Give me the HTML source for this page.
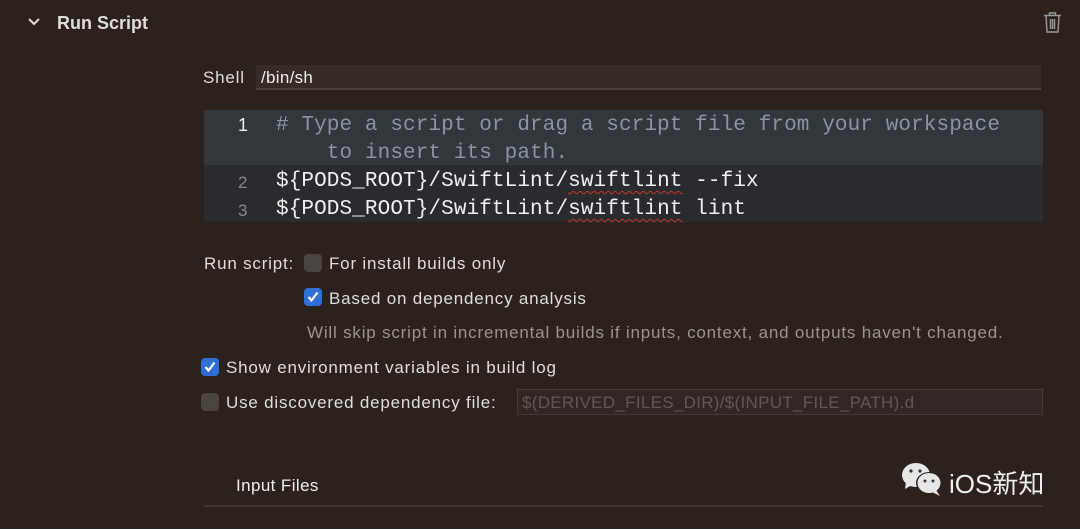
<!DOCTYPE html>
<html><head><meta charset="utf-8"><style>
body{margin:0;width:1080px;height:529px;background:#2b221e;font-family:"Liberation Sans",sans-serif;color:#dedede;position:relative;overflow:hidden}
.a{position:absolute;white-space:nowrap}
.t{font-size:17px;letter-spacing:0.8px}
.cb{position:absolute;width:18px;height:18px;border-radius:4px;background:#4a4441}
.cb.on{background:#2f6fd6}
.mono{font-family:"Liberation Mono",monospace;font-size:21px;letter-spacing:0.1px}
.sq{text-decoration:underline wavy #c0392b;text-decoration-thickness:1px;text-underline-offset:4px}
</style></head><body>
<svg class="a" style="left:27px;top:17px" width="14" height="10"><path d="M2 2 L7 7 L12 2" stroke="#ddd" stroke-width="2" fill="none"/></svg>
<div class="a" style="left:57px;top:13px;font-size:18px;font-weight:bold;color:#ddd">Run Script</div>
<svg class="a" style="left:1043px;top:12px" width="20" height="22"><g stroke="#999" stroke-width="1.4" fill="none"><path d="M1 3.5H18"/><path d="M6.5 3.5V1H12.5V3.5"/><path d="M3 3.5L4 20H15L16 3.5"/><path d="M7.5 7V17M9.5 7V17M11.5 7V17"/></g></svg>
<div class="a t" style="left:203px;top:68px">Shell</div>
<div class="a" style="left:256px;top:65px;width:785px;height:23px;background:#352b27;border-bottom:2px solid #4a403c"></div>
<div class="a t" style="left:261px;top:68px;color:#eee;letter-spacing:0.3px">/bin/sh</div>
<div class="a" style="left:204px;top:110px;width:839px;height:112px;background:#2a2b2f"></div>
<div class="a" style="left:204px;top:110px;width:839px;height:55px;background:#33363b"></div>
<div class="a" style="left:238px;top:115px;font-size:18px;color:#eee">1</div>
<div class="a" style="left:238px;top:173px;font-size:17px;color:#888">2</div>
<div class="a" style="left:238px;top:201px;font-size:17px;color:#888">3</div>
<div class="a mono" style="left:276px;top:112px;color:#8a959e;line-height:28px">#&nbsp;Type&nbsp;a&nbsp;script&nbsp;or&nbsp;drag&nbsp;a&nbsp;script&nbsp;file&nbsp;from&nbsp;your&nbsp;workspace<br>&nbsp;&nbsp;&nbsp;&nbsp;to&nbsp;insert&nbsp;its&nbsp;path.</div>
<div class="a mono" style="left:276px;top:168px;color:#f0f0f0;line-height:28px">${PODS_ROOT}/SwiftLint/<span class="sq">swiftlint</span> --fix<br>${PODS_ROOT}/SwiftLint/<span class="sq">swiftlint</span> lint</div>
<div class="a t" style="left:204px;top:254px">Run script:</div>
<div class="cb" style="left:304px;top:254px"></div>
<div class="a t" style="left:329px;top:254px">For install builds only</div>
<div class="cb on" style="left:304px;top:288px"><svg width="18" height="18"><path d="M4.5 9L7.5 12.5L13.5 4.5" stroke="#fff" stroke-width="2.2" fill="none"/></svg></div>
<div class="a t" style="left:329px;top:289px">Based on dependency analysis</div>
<div class="a t" style="left:307px;top:323px;color:#9a9390">Will skip script in incremental builds if inputs, context, and outputs haven't changed.</div>
<div class="cb on" style="left:201px;top:358px"><svg width="18" height="18"><path d="M4.5 9L7.5 12.5L13.5 4.5" stroke="#fff" stroke-width="2.2" fill="none"/></svg></div>
<div class="a t" style="left:226px;top:358px">Show environment variables in build log</div>
<div class="cb" style="left:201px;top:393px"></div>
<div class="a t" style="left:226px;top:393px">Use discovered dependency file:</div>
<div class="a" style="left:517px;top:389px;width:524px;height:24px;background:#2f2723;border:1px solid #433a36"></div>
<div class="a t" style="left:522px;top:393px;color:#5f5753;letter-spacing:0.3px">$(DERIVED_FILES_DIR)/$(INPUT_FILE_PATH).d</div>
<div class="a t" style="left:236px;top:476px;color:#eee;letter-spacing:0.4px">Input Files</div>
<div class="a" style="left:204px;top:505px;width:839px;height:2px;background:#3e3532"></div>
<svg class="a" style="left:900px;top:460px" width="46" height="38"><ellipse cx="16" cy="15" rx="14" ry="12" fill="#e6e6e6"/><path d="M6 22L5 29L12 25Z" fill="#e6e6e6"/><ellipse cx="29" cy="23" rx="13" ry="11" fill="#2b221e"/><ellipse cx="29" cy="23" rx="11.5" ry="10" fill="#e6e6e6"/><path d="M36 30L40 36L32 32Z" fill="#e6e6e6"/><circle cx="11" cy="11" r="1.6" fill="#333"/><circle cx="20" cy="11" r="1.6" fill="#333"/><circle cx="25" cy="21" r="1.5" fill="#333"/><circle cx="33" cy="21" r="1.5" fill="#333"/></svg>
<div class="a" style="left:949px;top:464px;font-size:26px;color:#eee;font-family:'Liberation Sans','Noto Sans CJK SC',sans-serif">iOS新知</div>
</body></html>
